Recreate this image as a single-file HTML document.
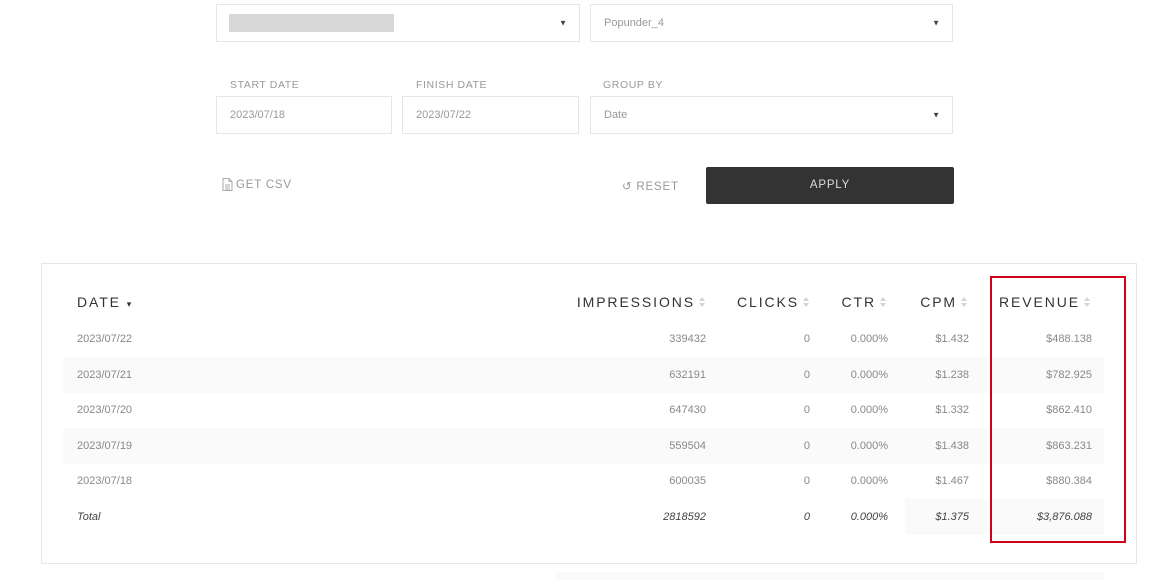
<!DOCTYPE html>
<html><head><meta charset="utf-8"><style>
*{margin:0;padding:0;box-sizing:border-box}
body{width:1170px;height:580px;background:#fff;position:relative;font-family:"Liberation Sans",sans-serif;overflow:hidden;color:#888}
.a{position:absolute}
.box{position:absolute;border:1px solid #e6e6e6;background:#fff;font-size:11px;color:#999;padding-left:13px;display:flex;align-items:center}
.car{position:absolute;right:12px;top:50%;transform:translateY(-50%);font-size:8px;color:#444}
.lbl{position:absolute;font-size:10.5px;color:#999;letter-spacing:.6px}
.h{position:absolute;top:292px;font-size:14px;color:#333;letter-spacing:1.9px;line-height:20px;white-space:nowrap}
.s{display:inline-block;width:6px;height:10px;vertical-align:middle;position:relative;top:-1px;margin-left:4px}
.s:before,.s:after{content:"";position:absolute;left:0;border-left:3px solid transparent;border-right:3px solid transparent}
.s:before{top:0;border-bottom:4px solid #d4d4d4}
.s:after{bottom:0;border-top:4px solid #d4d4d4}
.c{position:absolute;font-size:11px;color:#888;text-align:right;line-height:14px}
.t{font-style:italic;color:#444}
</style></head><body>
<div class="box" style="left:216px;top:4px;width:364px;height:38px"><div style="width:165px;height:18px;background:#d8d8d8;margin-left:-1px"></div><span class="car">▼</span></div>
<div class="box" style="left:590px;top:4px;width:363px;height:38px">Popunder_4<span class="car">▼</span></div>
<div class="lbl" style="left:230px;top:79px">START DATE</div>
<div class="lbl" style="left:416px;top:79px">FINISH DATE</div>
<div class="lbl" style="left:603px;top:79px">GROUP BY</div>
<div class="box" style="left:216px;top:96px;width:176px;height:38px">2023/07/18</div>
<div class="box" style="left:402px;top:96px;width:177px;height:38px">2023/07/22</div>
<div class="box" style="left:590px;top:96px;width:363px;height:38px">Date<span class="car">▼</span></div>
<div class="a" style="left:222px;top:178px;font-size:11.5px;color:#999;letter-spacing:.8px;display:flex;align-items:center;gap:3px">
<svg width="11" height="13" viewBox="0 0 11 13"><path d="M1 .5h6l3 3v9H1z M7 .5v3h3 M3 7h5 M3 9h5 M3 11h5" fill="none" stroke="#aaa" stroke-width="1"/></svg>GET CSV</div>
<div class="a" style="left:622px;top:179px;font-size:11.5px;color:#999;letter-spacing:.8px">↺ RESET</div>
<div class="a" style="left:706px;top:167px;width:248px;height:37px;background:#333;border-radius:2px;color:#ddd;font-size:11.5px;letter-spacing:.8px;text-align:center;line-height:37px">APPLY</div>

<div class="a" style="left:41px;top:263px;width:1096px;height:301px;border:1px solid #e6e6e6"></div>
<div class="a" style="left:63px;top:357px;width:1041px;height:36px;background:#fafafa"></div>
<div class="a" style="left:63px;top:428px;width:1041px;height:36px;background:#fafafa"></div>
<div class="a" style="left:905px;top:499px;width:199px;height:36px;background:#fafafa"></div>
<div class="a" style="left:990px;top:276px;width:136px;height:267px;border:2px solid #d0021b"></div>

<div class="h" style="left:77px">DATE <span style="font-size:9px;color:#333">▾</span></div>
<div class="h" style="right:465px">IMPRESSIONS<span class="s"></span></div>
<div class="h" style="right:361px">CLICKS<span class="s"></span></div>
<div class="h" style="right:284px">CTR<span class="s"></span></div>
<div class="h" style="right:203px">CPM<span class="s"></span></div>
<div class="h" style="right:80px">REVENUE<span class="s"></span></div>

<div id="rows"></div>
<script>
var d=[["2023/07/22","339432","0","0.000%","$1.432","$488.138"],["2023/07/21","632191","0","0.000%","$1.238","$782.925"],["2023/07/20","647430","0","0.000%","$1.332","$862.410"],["2023/07/19","559504","0","0.000%","$1.438","$863.231"],["2023/07/18","600035","0","0.000%","$1.467","$880.384"],["Total","2818592","0","0.000%","$1.375","$3,876.088"]];
var ys=[339,375,410,446,481,517],rs=[706,810,888,969,1092],h="";
d.forEach(function(r,i){var t=i==5?" t":"";var y=ys[i]-7;
h+='<div class="c'+t+'" style="left:77px;top:'+y+'px;text-align:left">'+r[0]+'</div>';
for(var j=1;j<6;j++)h+='<div class="c'+t+'" style="right:'+(1170-rs[j-1])+'px;top:'+y+'px">'+r[j]+'</div>';});
document.getElementById("rows").innerHTML=h;
</script>
<div class="a" style="left:556px;top:572px;width:548px;height:8px;background:#fafafa"></div>
</body></html>
